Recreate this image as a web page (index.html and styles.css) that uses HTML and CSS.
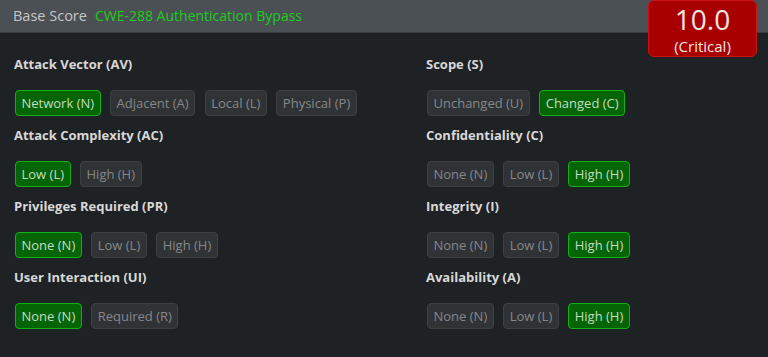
FILE: index.html
```html
<!DOCTYPE html>
<html lang="en">

<head>
     <meta charset="UTF-8">
     <meta name="viewport" content="width=device-width, initial-scale=1.0">
     <title>CVSS Calculator</title>
     <link rel="stylesheet" href="styles.css">
</head>

<body>
     <header class="header">
          <span class="header-title">Base Score</span>
          <span class="header-cwe">CWE-288 Authentication Bypass</span>
          <div class="score">
               <span class="score-value">10.0</span>
               <span class="score-label">(Critical)</span>
          </div>
     </header>
     <main class="metrics">
          <section class="column">
               <article class="metric">
                    <h3>Attack Vector (AV)</h3>
                    <div class="options">
                         <button class="opt active">Network (N)</button>
                         <button class="opt">Adjacent (A)</button>
                         <button class="opt">Local (L)</button>
                         <button class="opt">Physical (P)</button>
                    </div>
               </article>
               <article class="metric">
                    <h3>Attack Complexity (AC)</h3>
                    <div class="options">
                         <button class="opt active">Low (L)</button>
                         <button class="opt">High (H)</button>
                    </div>
               </article>
               <article class="metric">
                    <h3>Privileges Required (PR)</h3>
                    <div class="options">
                         <button class="opt active">None (N)</button>
                         <button class="opt">Low (L)</button>
                         <button class="opt">High (H)</button>
                    </div>
               </article>
               <article class="metric">
                    <h3>User Interaction (UI)</h3>
                    <div class="options">
                         <button class="opt active">None (N)</button>
                         <button class="opt">Required (R)</button>
                    </div>
               </article>
          </section>
          <section class="column">
               <article class="metric">
                    <h3>Scope (S)</h3>
                    <div class="options">
                         <button class="opt">Unchanged (U)</button>
                         <button class="opt active">Changed (C)</button>
                    </div>
               </article>
               <article class="metric">
                    <h3>Confidentiality (C)</h3>
                    <div class="options">
                         <button class="opt">None (N)</button>
                         <button class="opt">Low (L)</button>
                         <button class="opt active">High (H)</button>
                    </div>
               </article>
               <article class="metric">
                    <h3>Integrity (I)</h3>
                    <div class="options">
                         <button class="opt">None (N)</button>
                         <button class="opt">Low (L)</button>
                         <button class="opt active">High (H)</button>
                    </div>
               </article>
               <article class="metric">
                    <h3>Availability (A)</h3>
                    <div class="options">
                         <button class="opt">None (N)</button>
                         <button class="opt">Low (L)</button>
                         <button class="opt active">High (H)</button>
                    </div>
               </article>
          </section>
     </main>
</body>
</html>
```

FILE: styles.css
```css
html {
     box-sizing: border-box;
     font-family: "Open Sans", sans-serif;
     font-size: 13px;
}

*,
*:before,
*:after {
     box-sizing: inherit;
}

body {
     margin: 0;
     min-height: 100vh;
     background-color: #1f2224;
     color: #d8d8d8;
}

.header {
     position: relative;
     display: flex;
     align-items: center;
     height: 33px;
     padding-left: 13px;
     padding-bottom: 1px;
     background-color: #4b5055;
     border-bottom: 1px solid #3a3e42;
}

.header-title {
     color: #c4c6c8;
     font-size: 14.5px;
}

.header-cwe {
     margin-left: 8px;
     color: #1ccc1c;
     font-size: 14px;
}

.score {
     position: absolute;
     top: 0;
     right: 11px;
     width: 109px;
     height: 57px;
     display: flex;
     flex-direction: column;
     align-items: center;
     justify-content: flex-start;
     background-color: #a80000;
     border: 1px solid #c81414;
     border-radius: 6px;
     color: #f2e4e4;
}

.score-value {
     font-size: 28px;
     line-height: 36px;
}

.score-label {
     font-size: 15px;
     line-height: 18px;
}

.metrics {
     display: grid;
     grid-template-columns: 412px 1fr;
     padding: 22px 14px 0;
}

.metric {
     margin-bottom: 10px;
}

.metric h3 {
     margin: 0 0 17px;
     font-size: 13px;
     line-height: 18px;
     color: #d8d8d8;
}

.options {
     display: flex;
     gap: 9.5px;
     padding-left: 1px;
}

.opt {
     height: 26px;
     padding: 0 5.5px;
     font-family: inherit;
     font-size: 13px;
     color: #858789;
     background-color: #303336;
     border: 1px solid #3c4043;
     border-radius: 4px;
}

.opt.active {
     color: #c4dcc4;
     background-color: #056405;
     border-color: #12b012;
}
```
